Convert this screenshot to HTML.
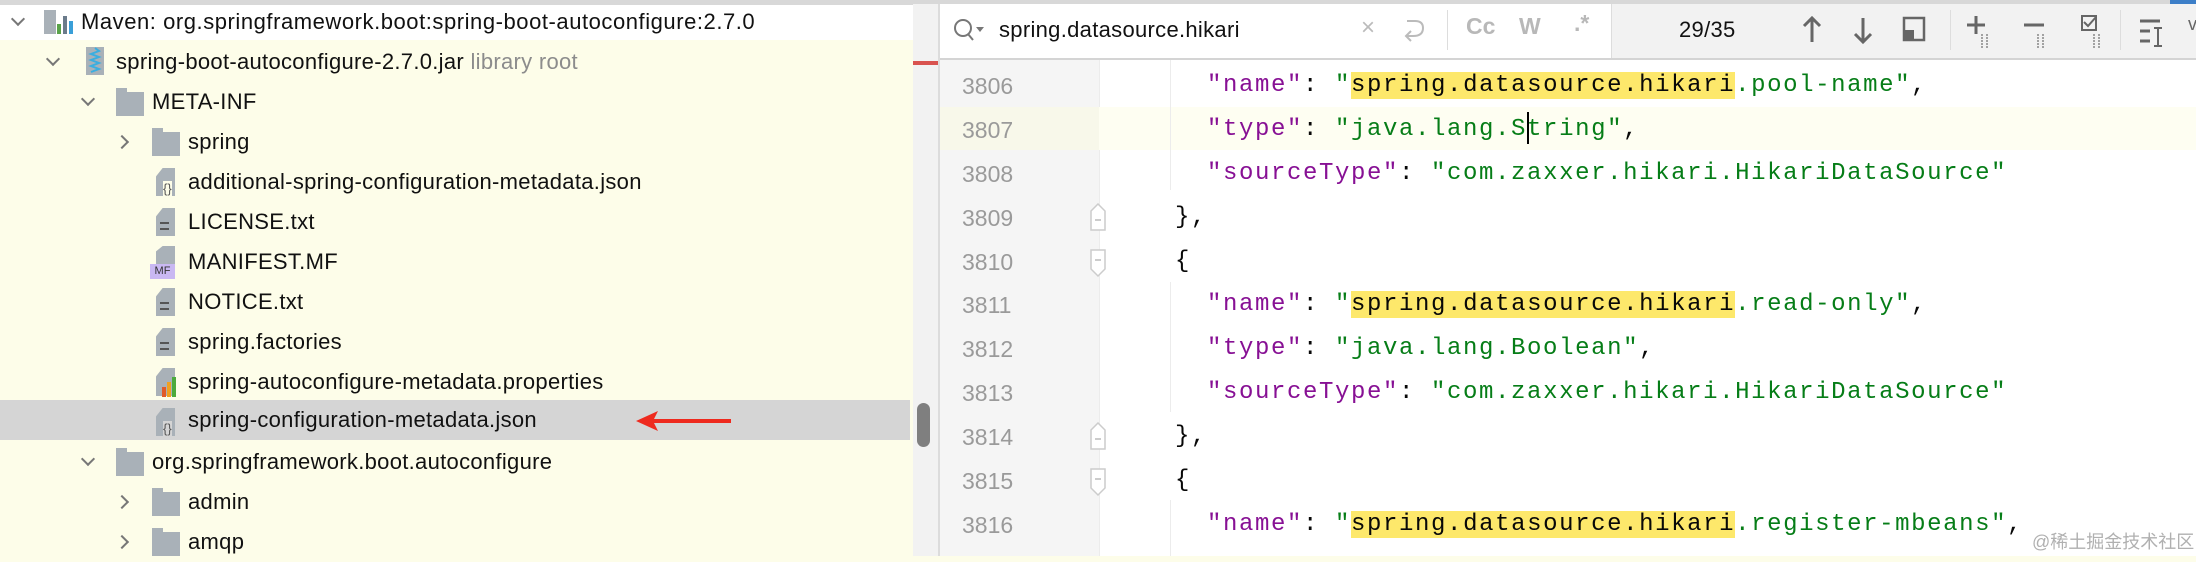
<!DOCTYPE html>
<html><head><meta charset="utf-8">
<style>
*{margin:0;padding:0;box-sizing:border-box}
body{width:2196px;height:556px;overflow:hidden;position:relative;background:#fdfde9;font-family:"Liberation Sans","Noto Sans CJK SC",sans-serif;}
.a{position:absolute}
.t{position:absolute;font-size:22px;color:#111;white-space:nowrap;line-height:40px;letter-spacing:0.3px}
.chev{position:absolute;width:10px;height:10px;border-right:2px solid #777;border-bottom:2px solid #777}
.down{transform:rotate(45deg)}
.right{transform:rotate(-45deg)}
.folder{position:absolute;width:28px;height:24px;background:#a9b1b8}
.folder:before{content:"";position:absolute;left:0;top:-4px;width:11px;height:4px;background:#a9b1b8}
.file{position:absolute;width:19px;height:28px;background:#a9b1b8;clip-path:polygon(35% 0,100% 0,100% 100%,0 100%,0 30%)}
.code{position:absolute;font-family:"Liberation Mono",monospace;font-size:24px;letter-spacing:1.6px;white-space:pre;line-height:44px;color:#080808}
.k{color:#871094}.s{color:#067d17}
.hl{background:#fde86b;color:#080808}
.ln{position:absolute;left:962px;font-family:"Liberation Sans",sans-serif;font-size:23px;color:#9a9a9a;line-height:44px}
</style></head><body>
<!-- left panel -->
<div class="a" style="left:0;top:0;width:913px;height:5px;background:#d8d8d8"></div>
<div class="a" style="left:0;top:5px;width:913px;height:35px;background:#fff"></div>
<div class="a" style="left:0;top:400px;width:910px;height:40px;background:#d5d5d5"></div>

<div class="chev down" style="left:13px;top:14px"></div>
<svg class="a" style="left:44px;top:10px" width="30" height="24"><rect x="0" y="0" width="12" height="24" fill="#a9b1b8"/><rect x="13" y="14" width="4" height="10" fill="#5aa34a"/><rect x="19" y="6" width="4" height="18" fill="#6b7b8b"/><rect x="25" y="11" width="4" height="13" fill="#3a9fd8"/></svg>
<div class="t" style="left:81px;top:2px;letter-spacing:0.55px">Maven: org.springframework.boot:spring-boot-autoconfigure:2.7.0</div>

<div class="chev down" style="left:48px;top:54px"></div>
<svg class="a" style="left:86px;top:47px" width="18" height="28"><rect width="18" height="28" fill="#a9b1b8"/><path d="M9 1 L13 4 L5 7 L13 10 L5 13 L13 16 L5 19 L13 22 L5 25" stroke="#3aaee0" stroke-width="2" fill="none"/></svg>
<div class="t" style="left:116px;top:42px">spring-boot-autoconfigure-2.7.0.jar <span style="color:#8c8c8c">library root</span></div>

<div class="chev down" style="left:83px;top:94px"></div>
<div class="folder" style="left:116px;top:92px"></div>
<div class="t" style="left:152px;top:82px">META-INF</div>

<div class="chev right" style="left:117px;top:137px"></div>
<div class="folder" style="left:152px;top:132px"></div>
<div class="t" style="left:188px;top:122px">spring</div>

<div class="file" style="left:156px;top:168px"></div>
<div class="a" style="left:163px;top:181px;font-size:13px;color:#555;background:#fdfde9;line-height:16px">{}</div>
<div class="t" style="left:188px;top:162px">additional-spring-configuration-metadata.json</div>

<div class="file" style="left:156px;top:208px"></div>
<div class="a" style="left:160px;top:222px;width:9px;height:8px;border-top:2px solid #555;border-bottom:2px solid #555"></div>
<div class="t" style="left:188px;top:202px">LICENSE.txt</div>

<div class="file" style="left:156px;top:246px;height:18px"></div>
<div class="a" style="left:150px;top:264px;width:25px;height:15px;background:#c9b8f2;font-size:11px;color:#333;text-align:center;line-height:15px">MF</div>
<div class="t" style="left:188px;top:242px">MANIFEST.MF</div>

<div class="file" style="left:156px;top:288px"></div>
<div class="a" style="left:160px;top:302px;width:9px;height:8px;border-top:2px solid #555;border-bottom:2px solid #555"></div>
<div class="t" style="left:188px;top:282px">NOTICE.txt</div>

<div class="file" style="left:156px;top:328px"></div>
<div class="a" style="left:160px;top:342px;width:9px;height:8px;border-top:2px solid #555;border-bottom:2px solid #555"></div>
<div class="t" style="left:188px;top:322px">spring.factories</div>

<div class="file" style="left:156px;top:368px"></div>
<svg class="a" style="left:162px;top:373px" width="16" height="24"><rect x="0" y="14" width="4" height="10" fill="#e05a2a"/><rect x="5" y="9" width="4" height="15" fill="#f0a020"/><rect x="10" y="4" width="4" height="20" fill="#4caa3c"/></svg>
<div class="t" style="left:188px;top:362px">spring-autoconfigure-metadata.properties</div>

<div class="file" style="left:156px;top:408px"></div>
<div class="a" style="left:163px;top:421px;font-size:13px;color:#555;background:#d5d5d5;line-height:16px">{}</div>
<div class="t" style="left:188px;top:400px">spring-configuration-metadata.json</div>
<svg class="a" style="left:634px;top:408px" width="100" height="26"><path d="M2 13 L24 3 L20 11 L97 11 L97 15 L20 15 L24 23 Z" fill="#ee2a1e"/></svg>

<div class="chev down" style="left:83px;top:454px"></div>
<div class="folder" style="left:116px;top:452px"></div>
<div class="t" style="left:152px;top:442px">org.springframework.boot.autoconfigure</div>

<div class="chev right" style="left:117px;top:497px"></div>
<div class="folder" style="left:152px;top:492px"></div>
<div class="t" style="left:188px;top:482px">admin</div>

<div class="chev right" style="left:117px;top:537px"></div>
<div class="folder" style="left:152px;top:532px"></div>
<div class="t" style="left:188px;top:522px">amqp</div>

<!-- right panel -->
<div class="a" style="left:913px;top:0;width:1283px;height:556px;background:#fff"></div>
<div class="a" style="left:913px;top:0;width:26px;height:556px;background:#f2f2f2"></div>
<div class="a" style="left:913px;top:61px;width:26px;height:4px;background:#d9534f"></div>
<div class="a" style="left:917px;top:403px;width:13px;height:44px;border-radius:7px;background:#7f7f7f"></div>
<div class="a" style="left:938px;top:0;width:2px;height:556px;background:#dcdcdc"></div>
<div class="a" style="left:940px;top:0;width:1256px;height:60px;background:#f2f2f2"></div>
<div class="a" style="left:913px;top:0;width:1283px;height:4px;background:#d8d8d8"></div>
<div class="a" style="left:2170px;top:0;width:26px;height:4px;background:#3d7fc8"></div>
<div class="a" style="left:940px;top:4px;width:672px;height:54px;background:#fff;border-right:1px solid #ddd"></div>
<div class="a" style="left:940px;top:58px;width:1256px;height:2px;background:#d4d4d4"></div>
<!-- search bar -->
<svg class="a" style="left:953px;top:18px" width="36" height="26"><circle cx="10" cy="10" r="8" stroke="#777" stroke-width="2" fill="none"/><path d="M15 16 L20 22" stroke="#777" stroke-width="2"/><path d="M23 9 L31 9 L27 14 Z" fill="#777"/></svg>
<div class="t" style="left:999px;top:10px">spring.datasource.hikari</div>
<div class="a" style="left:1361px;top:14px;font-size:24px;color:#bbb">×</div>
<svg class="a" style="left:1401px;top:16px" width="28" height="28"><path d="M6 20 L12 20 Q22 20 22 12 Q22 5 14 5 L6 5" stroke="#bbb" stroke-width="2" fill="none"/><path d="M10 15 L5 20 L10 25" stroke="#bbb" stroke-width="2" fill="none"/></svg>
<div class="a" style="left:1447px;top:10px;width:1px;height:40px;background:#ddd"></div>
<div class="a" style="left:1466px;top:13px;font-size:23px;font-weight:bold;color:#b8b8b8">Cc</div>
<div class="a" style="left:1519px;top:13px;font-size:23px;font-weight:bold;color:#b8b8b8">W</div>
<div class="a" style="left:1574px;top:10px;font-size:23px;font-weight:bold;color:#b8b8b8">.*</div>
<div class="t" style="left:1679px;top:10px">29/35</div>
<svg class="a" style="left:1800px;top:14px" width="140" height="32"><path d="M12 4 L12 28 M4 12 L12 4 L20 12" stroke="#666" stroke-width="3" fill="none"/><path d="M63 4 L63 28 M55 20 L63 28 L71 20" stroke="#666" stroke-width="3" fill="none"/><rect x="104" y="4" width="20" height="22" stroke="#666" stroke-width="2.5" fill="none"/><rect x="104" y="16" width="10" height="10" fill="#666"/></svg>
<div class="a" style="left:1950px;top:10px;width:1px;height:40px;background:#ddd"></div>
<svg class="a" style="left:1966px;top:14px" width="150" height="36"><path d="M10 2 L10 20 M1 11 L19 11" stroke="#666" stroke-width="3"/><path d="M16 20 L16 34 M21 20 L21 34" stroke="#888" stroke-width="1.5" stroke-dasharray="2 1"/><path d="M58 11 L78 11" stroke="#666" stroke-width="3"/><path d="M72 20 L72 34 M77 20 L77 34" stroke="#888" stroke-width="1.5" stroke-dasharray="2 1"/><rect x="116" y="2" width="14" height="14" stroke="#666" stroke-width="2" fill="none"/><path d="M118 8 L122 12 L130 3" stroke="#666" stroke-width="2" fill="none"/><path d="M128 20 L128 34 M133 20 L133 34" stroke="#888" stroke-width="1.5" stroke-dasharray="2 1"/></svg>
<div class="a" style="left:2120px;top:10px;width:1px;height:40px;background:#ddd"></div>
<svg class="a" style="left:2138px;top:18px" width="40" height="32"><path d="M2 3 L22 3 M2 13 L12 13 M2 23 L12 23" stroke="#666" stroke-width="3"/><path d="M20 10 L20 28 M16 10 L24 10 M16 28 L24 28" stroke="#666" stroke-width="2"/></svg>
<div class="a" style="left:2188px;top:14px;font-size:18px;color:#666">v</div>

<!-- editor -->
<div class="a" style="left:940px;top:60px;width:159px;height:496px;background:#f5f5f5"></div>
<div class="a" style="left:1099px;top:60px;width:1px;height:496px;background:#ececec"></div>
<div class="a" style="left:940px;top:107px;width:1256px;height:43px;background:#fefef2"></div>
<div class="a" style="left:940px;top:107px;width:159px;height:43px;background:#f8f8ea"></div>
<div class="a" style="left:1170px;top:60px;width:1px;height:130px;background:#ececec"></div>
<div class="a" style="left:1170px;top:282px;width:1px;height:130px;background:#ececec"></div>
<div class="a" style="left:1170px;top:500px;width:1px;height:56px;background:#ececec"></div>

<div class="ln" style="top:64px">3806</div>
<div class="ln" style="top:108px">3807</div>
<div class="ln" style="top:152px">3808</div>
<div class="ln" style="top:196px">3809</div>
<div class="ln" style="top:240px">3810</div>
<div class="ln" style="top:283px">3811</div>
<div class="ln" style="top:327px">3812</div>
<div class="ln" style="top:371px">3813</div>
<div class="ln" style="top:415px">3814</div>
<div class="ln" style="top:459px">3815</div>
<div class="ln" style="top:503px">3816</div>

<svg class="a" style="left:1089px;top:203px" width="20" height="30"><path d="M2 8 L9 1 L16 8 L16 27 L2 27 Z" stroke="#ccc" stroke-width="1.5" fill="#fff"/><path d="M6 17 L12 17" stroke="#bbb" stroke-width="1.5"/></svg>
<svg class="a" style="left:1089px;top:248px" width="20" height="30"><path d="M2 2 L16 2 L16 21 L9 28 L2 21 Z" stroke="#ccc" stroke-width="1.5" fill="#fff"/><path d="M6 12 L12 12" stroke="#bbb" stroke-width="1.5"/></svg>
<svg class="a" style="left:1089px;top:422px" width="20" height="30"><path d="M2 8 L9 1 L16 8 L16 27 L2 27 Z" stroke="#ccc" stroke-width="1.5" fill="#fff"/><path d="M6 17 L12 17" stroke="#bbb" stroke-width="1.5"/></svg>
<svg class="a" style="left:1089px;top:467px" width="20" height="30"><path d="M2 2 L16 2 L16 21 L9 28 L2 21 Z" stroke="#ccc" stroke-width="1.5" fill="#fff"/><path d="M6 12 L12 12" stroke="#bbb" stroke-width="1.5"/></svg>

<div class="code" style="left:1207px;top:64px"><span class="k">"name"</span>: <span class="s">"</span><span class="hl">spring.datasource.hikari</span><span class="s">.pool-name"</span>,</div>
<div class="code" style="left:1207px;top:108px"><span class="k">"type"</span>: <span class="s">"java.lang.String"</span>,</div>
<div class="a" style="left:1527px;top:112px;width:2px;height:32px;background:#000"></div>
<div class="code" style="left:1207px;top:152px"><span class="k">"sourceType"</span>: <span class="s">"com.zaxxer.hikari.HikariDataSource"</span></div>
<div class="code" style="left:1175px;top:196px">},</div>
<div class="code" style="left:1175px;top:240px">{</div>
<div class="code" style="left:1207px;top:283px"><span class="k">"name"</span>: <span class="s">"</span><span class="hl">spring.datasource.hikari</span><span class="s">.read-only"</span>,</div>
<div class="code" style="left:1207px;top:327px"><span class="k">"type"</span>: <span class="s">"java.lang.Boolean"</span>,</div>
<div class="code" style="left:1207px;top:371px"><span class="k">"sourceType"</span>: <span class="s">"com.zaxxer.hikari.HikariDataSource"</span></div>
<div class="code" style="left:1175px;top:415px">},</div>
<div class="code" style="left:1175px;top:459px">{</div>
<div class="code" style="left:1207px;top:503px"><span class="k">"name"</span>: <span class="s">"</span><span class="hl">spring.datasource.hikari</span><span class="s">.register-mbeans"</span>,</div>

<div class="a" style="left:2032px;top:528px;font-size:18px;color:#b0b0b0;white-space:nowrap;font-family:'Liberation Sans','Noto Sans CJK SC',sans-serif">@稀土掘金技术社区</div>
</body></html>
